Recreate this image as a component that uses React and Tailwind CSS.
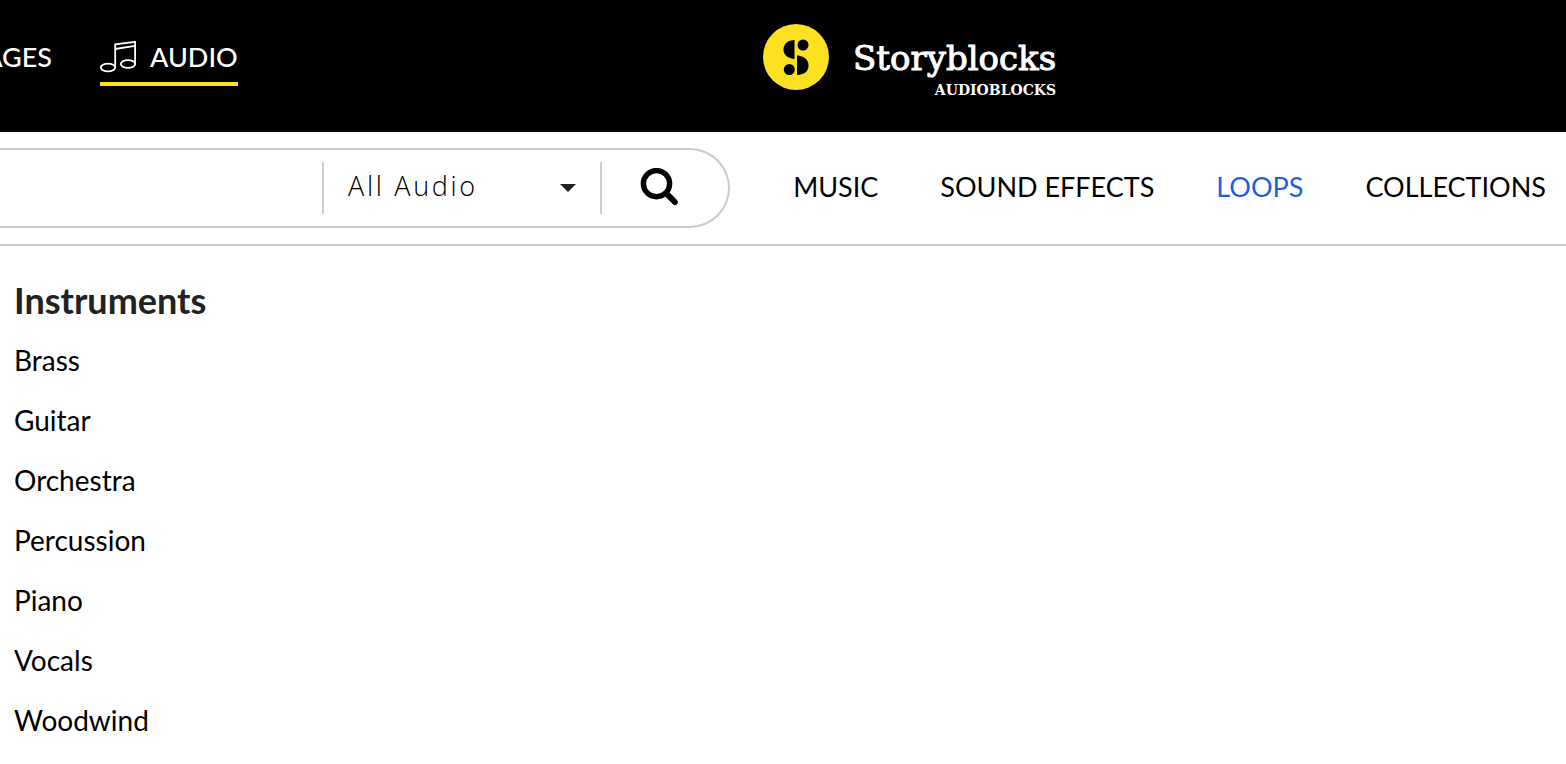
const categories = [
  { label: 'MUSIC', href: '#music' },
  { label: 'SOUND EFFECTS', href: '#sound-effects' },
  { label: 'LOOPS', href: '#loops', active: true },
  { label: 'COLLECTIONS', href: '#collections' },
];

const instruments = ['Brass', 'Guitar', 'Orchestra', 'Percussion', 'Piano', 'Vocals', 'Woodwind'];

function NotesIcon() {
  return (
    <svg className="h-8 w-9" viewBox="0 0 36 32" fill="none" stroke="currentColor" strokeWidth="1.8" aria-hidden="true">
      <ellipse cx="8" cy="26.5" rx="7.2" ry="3.8" />
      <ellipse cx="28" cy="23" rx="7.2" ry="3.8" />
      <path d="M15.2 26.500V3.300L35.100 0.900V23M15.200 8L35.100 4.900" />
    </svg>
  );
}

function LogoMark() {
  return (
    <svg className="size-[66px]" viewBox="0 0 66 66" aria-hidden="true">
      <circle cx="33" cy="33" r="33" fill="#fbe122" />
      <path d="M31.500 16V35C25 34.500 20.500 31 20.500 25.500S25 16 31.500 16Z" />
      <path d="M34 31.500C41 32 45.500 35.500 45.500 41.500S41 51 34 51Z" />
      <circle cx="40" cy="21" r="5.500" />
      <circle cx="26.300" cy="45.500" r="5.500" />
    </svg>
  );
}

function SearchIcon() {
  return (
    <svg className="size-10" viewBox="0 0 40 40" fill="none" stroke="currentColor" aria-hidden="true">
      <circle cx="16.500" cy="15.700" r="13.100" strokeWidth="5.400" />
      <path d="M28 27L34.800 34" strokeWidth="6" strokeLinecap="round" />
      <path d="M24 23.500L29 28" strokeWidth="4" />
    </svg>
  );
}

export default function App() {
  return (
    <div className="min-h-screen bg-white font-['Lato',sans-serif] text-black">
      <header className="grid h-[132px] grid-cols-[763fr_803fr] bg-black text-white">
        <nav aria-label="Media" className="flex items-start gap-12 overflow-hidden pt-8 text-[27px] leading-[50px] font-medium">
          <a href="#images" className="flex w-[52px] justify-end">IMAGES</a>
          <a href="#audio" aria-current="page" className="flex items-center gap-3.5 border-b-4 border-[#fbe122]">
            <NotesIcon />
            AUDIO
          </a>
        </nav>
        <a href="#home" className="flex items-start gap-6 pt-6">
          <LogoMark />
          <span className="flex flex-col items-end pt-3 font-['DejaVu_Serif',serif]">
            <span className="text-[34px] leading-[44px] [-webkit-text-stroke:1px_white]">Storyblocks</span>
            <span className="text-sm leading-5 font-bold">AUDIOBLOCKS</span>
          </span>
        </a>
      </header>

      <div className="flex items-center justify-between border-b-2 border-[#ccc] py-4 pr-5">
        <form role="search" className="flex h-20 w-[730px] items-center rounded-r-full border-2 border-l-0 border-[#ccc]" onSubmit={(event) => event.preventDefault()}>
          <input type="search" aria-label="Search audio" className="h-full min-w-0 flex-1 px-4 text-2xl outline-none" />
          <div className="relative flex h-[52px] w-[280px] items-center border-x-2 border-[#ccc]">
            <select aria-label="Audio type" className="h-full w-full appearance-none bg-transparent pb-1 pl-6 font-['Open_Sans',sans-serif] text-[27px] font-light tracking-widest text-black outline-none">
              <option>All Audio</option>
              <option>Music</option>
              <option>Sound Effects</option>
              <option>Loops</option>
            </select>
            <svg className="pointer-events-none absolute right-6 h-2 w-4" viewBox="0 0 16 8" aria-hidden="true">
              <path d="M0 0H16L8 8Z" fill="#222" />
            </svg>
          </div>
          <button type="submit" aria-label="Search" className="flex h-full w-[126px] items-center pl-[38px]">
            <SearchIcon />
          </button>
        </form>
        <nav aria-label="Audio categories" className="flex gap-[62px] pb-0.5 text-[27px] leading-10 whitespace-nowrap">
          {categories.map(({ label, href, active }) => (
            <a key={label} href={href} className={active ? 'text-[#1d5fe0]' : 'text-black'}>
              {label}
            </a>
          ))}
        </nav>
      </div>

      <main className="px-3.5 pt-[34px]">
        <h2 className="text-[36px] leading-10 font-bold text-[#222]">Instruments</h2>
        <ul className="pt-2.5 text-[28px] leading-[60px]">
          {instruments.map((name) => (
            <li key={name}>
              <a href={'#' + name.toLowerCase()}>{name}</a>
            </li>
          ))}
        </ul>
      </main>
    </div>
  );
}
